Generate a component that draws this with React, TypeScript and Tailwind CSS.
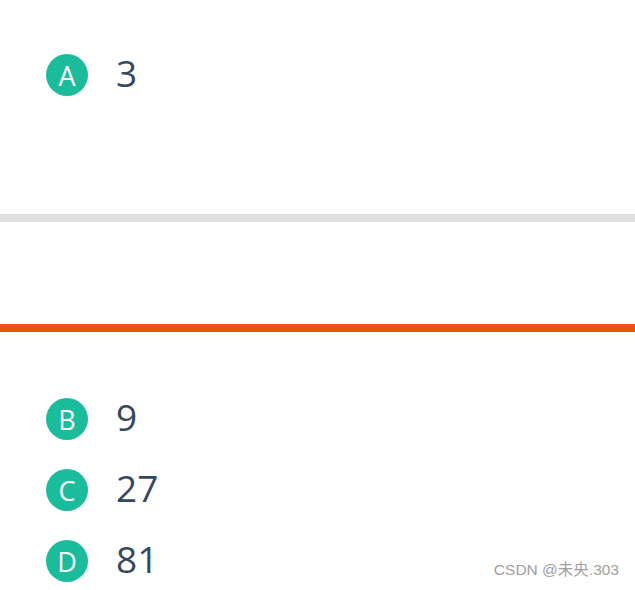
const rows = [
  { key: 'B', value: '9' },
  { key: 'C', value: '27' },
  { key: 'D', value: '81' },
];

function Option({ letter, value }: { letter: string; value: string }) {
  return (
    <div className="flex h-[42px] items-center gap-[28px]">
      <div className="flex h-[42px] w-[42px] shrink-0 items-center justify-center rounded-full bg-[#1abc9c] text-[27px] leading-none text-white">
        {letter}
      </div>
      <span className="mb-[5px] text-[37px] leading-none text-[#34495e]">{value}</span>
    </div>
  );
}

export default function App() {
  return (
    <div
      className="relative h-[590px] w-[635px] overflow-hidden bg-white"
      style={{ fontFamily: '"Open Sans", "Noto Sans", "Noto Sans CJK SC", sans-serif' }}
    >
      <div className="px-[46px] pt-[54px] pb-[118px]">
        <Option letter="A" value="3" />
      </div>

      <div className="h-2 bg-[#dedede]" />
      <div className="h-[102px]" />
      <div className="h-2 bg-[#ea5316]" />

      <div className="flex flex-col gap-[29px] px-[46px] pt-[66px]">
        {rows.map((r) => (
          <Option key={r.key} letter={r.key} value={r.value} />
        ))}
      </div>

      {/* watermark */}
      <div
        className="absolute right-[16px] bottom-[9px] text-[15.5px] text-[#a0a0a0]"
        style={{ fontFamily: '"Liberation Sans", "Noto Sans CJK SC", sans-serif' }}
      >
        CSDN @未央.303
      </div>
    </div>
  );
}
